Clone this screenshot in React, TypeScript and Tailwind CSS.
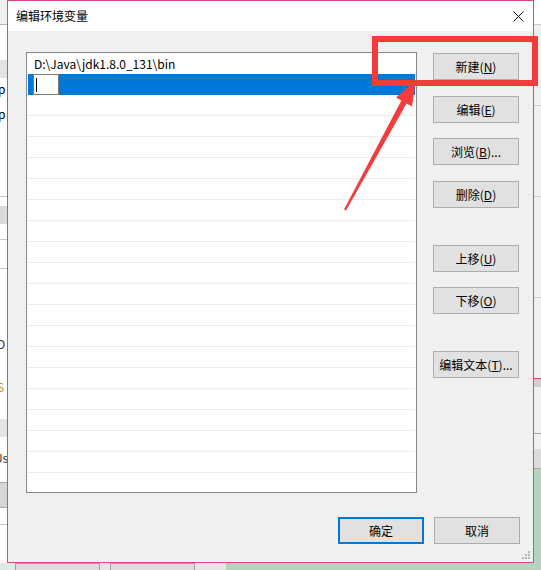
import React from 'react';

const Btn = ({ children, primary }: { children: React.ReactNode; primary?: boolean }) => (
  <button
    className={`w-[86px] h-[27px] flex items-center justify-center text-[12px] leading-none text-black bg-[#e1e1e1] ${
      primary ? 'border-2 border-[#0078d7]' : 'border border-[#adadad]'
    }`}
  >
    {children}
  </button>
);

export default function App() {
  const rows = Array.from({ length: 21 });

  return (
    <div className="relative w-[541px] h-[570px] overflow-hidden bg-[#f0f0f0] font-['Noto_Sans_CJK_SC','Microsoft_YaHei',sans-serif]">
      {/* ── windows behind (desktop) ── */}
      <div className="absolute left-0 top-0 w-[7px] h-[563px] bg-white">
        <div className="h-[25px] bg-[#f0f0f0] border-b border-[#b4b4b4]" />
        <div className="mt-[35px] h-[18px] bg-[#e3e3e3]" />
        <div className="text-[12px] leading-[25px] text-black -ml-[2px] mt-[-2px]">p<br />p</div>
        <div className="mt-[70px] h-px bg-[#c8c8c8]" />
        <div className="mt-[9px] h-[18px] bg-[#dadada]" />
        <div className="mt-[15px] h-px bg-[#c8c8c8]" />
        <div className="mt-[28px] h-px bg-[#c8c8c8]" />
        <div className="mt-[69px] text-[12px] leading-none text-[#333] -ml-[3px]">D</div>
        <div className="mt-[31px] text-[12px] leading-none text-[#c0902a] -ml-[3px]">S</div>
        <div className="mt-[26px] h-[18px] bg-[#e3e3e3]" />
        <div className="mt-[15px] text-[12px] leading-none text-[#333] -ml-[6px]">Us</div>
        <div className="mt-[18px] h-[26px] bg-[#d6d6d6] border-y border-[#a8a8a8]" />
        <div className="mt-[16px] h-px bg-[#c8c8c8]" />
      </div>
      <div className="absolute left-[534px] top-0 w-[7px] h-[570px] bg-[#f0f0f0]">
        <div className="h-[25px] bg-white border-b border-[#c8c8c8]" />
        <div className="mt-[80px] h-px bg-[#d0d0d0]" />
        <div className="mt-[90px] h-px bg-[#d0d0d0]" />
        <div className="mt-[100px] h-px bg-[#d0d0d0]" />
        <div className="mt-[80px] h-px bg-[#e3418f]" />
        <div className="h-[8px] bg-[#d0d0d0]" />
        <div className="mt-[46px] h-px bg-[#a8a8a8]" />
        <div className="mt-[15px] h-[20px] bg-[#dcdcdc] border-b border-[#a8a8a8]" />
        <div className="h-[120px] bg-[#b7d2bd]" />
      </div>
      <div className="absolute left-0 top-[563px] w-[541px] h-[7px] bg-[#e6e6e6] flex">
        <div className="ml-[15px] w-[85px] h-[7px] border-t border-x border-[#a0a0a0] bg-[#dcdcdc]" />
        <div className="ml-[10px] w-[85px] h-[7px] border-t border-x border-[#a0a0a0] bg-[#dcdcdc]" />
        <div className="ml-[31px] flex-1 bg-[#b7d2bd]" />
      </div>

      {/* ── dialog window ── */}
      <div className="absolute left-[7px] top-0 w-[527px] h-[563px] border border-[#e3418f] bg-[#f0f0f0] flex flex-col">
        <div className="h-[30px] bg-white flex items-center justify-between pl-[8px] pr-[9px]">
          <span className="text-[12px] text-black leading-none">编辑环境变量</span>
          <svg width="11" height="11" viewBox="0 0 11 11">
            <path d="M0.5 0.5 L10.5 10.5 M10.5 0.5 L0.5 10.5" stroke="#111" strokeWidth="1" />
          </svg>
        </div>

        <div className="flex pl-[18px] pt-[21px]">
          {/* list */}
          <div className="w-[391px] h-[441px] border border-[#828790] bg-white overflow-hidden px-px">
            {rows.map((_, i) => (
              <div
                key={i}
                className={`h-[21px] flex items-center ${
                  i === 1 ? 'bg-[#0078d7]' : i === 0 ? '' : 'border-b border-[#ececec]'
                }`}
              >
                {i === 0 && (
                  <span className="pl-[6px] text-[12px] leading-none text-black">D:\Java\jdk1.8.0_131\bin</span>
                )}
                {i === 1 && (
                  <div className="ml-[5px] w-[26px] h-[21px] bg-white border border-[#7a7a7a] flex items-center pl-[2px]">
                    <div className="w-px h-[14px] bg-black" />
                  </div>
                )}
              </div>
            ))}
          </div>

          {/* side buttons */}
          <div className="ml-[16px] flex flex-col">
            <div className="mt-px"><Btn>新建(<u>N</u>)</Btn></div>
            <div className="mt-[16px]"><Btn>编辑(<u>E</u>)</Btn></div>
            <div className="mt-[15px]"><Btn>浏览(<u>B</u>)...</Btn></div>
            <div className="mt-[16px]"><Btn>删除(<u>D</u>)</Btn></div>
            <div className="mt-[37px]"><Btn>上移(<u>U</u>)</Btn></div>
            <div className="mt-[15px]"><Btn>下移(<u>O</u>)</Btn></div>
            <div className="mt-[37px]"><Btn>编辑文本(<u>T</u>)...</Btn></div>
          </div>
        </div>

        <div className="mt-[24px] flex justify-end gap-[10px] pr-[13px]">
          <Btn primary>确定</Btn>
          <Btn>取消</Btn>
        </div>

        <div className="flex-1 flex justify-end items-end pr-[2px] pb-[2px]">
          <svg width="9" height="9" viewBox="0 0 9 9">
            <rect x="6" y="0" width="2" height="2" fill="#b4b4b4" />
            <rect x="3" y="3" width="2" height="2" fill="#b4b4b4" />
            <rect x="6" y="3" width="2" height="2" fill="#b4b4b4" />
            <rect x="0" y="6" width="2" height="2" fill="#b4b4b4" />
            <rect x="3" y="6" width="2" height="2" fill="#b4b4b4" />
            <rect x="6" y="6" width="2" height="2" fill="#b4b4b4" />
          </svg>
        </div>
      </div>

      {/* ── annotation ── */}
      <div className="absolute left-[372px] top-[36px] w-[166px] h-[50px] border-[6px] border-[#f53b3b]" />
      <svg className="absolute left-0 top-0 pointer-events-none" width="541" height="570" viewBox="0 0 541 570">
        <polygon
          points="344,209.5 401.4,100.6 396,97.5 416,80 412,106.5 406.6,103.4 346,210.5"
          fill="#f53b3b"
        />
      </svg>
    </div>
  );
}
